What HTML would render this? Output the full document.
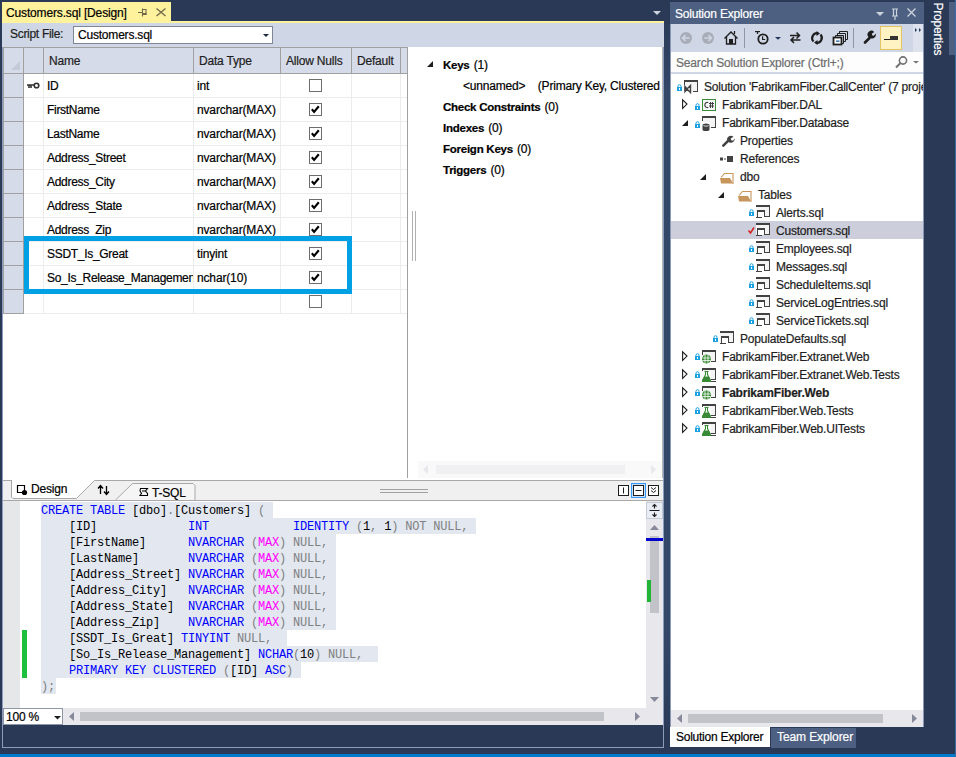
<!DOCTYPE html>
<html><head><meta charset="utf-8">
<style>
*{margin:0;padding:0;box-sizing:border-box}
html,body{width:956px;height:757px;overflow:hidden;background:#2a3955;font-family:"Liberation Sans",sans-serif;font-size:12px;color:#1e1e1e}
.a{position:absolute}
.t{position:absolute;white-space:nowrap;line-height:20px;height:20px;-webkit-text-stroke:0.2px currentColor}
.m{position:absolute;white-space:pre;font-family:"Liberation Mono",monospace;line-height:20px;height:20px}
svg{position:absolute;overflow:visible}
</style></head>
<body>

<div class="a" style="left:2px;top:2px;width:169px;height:19px;background:#fff29d;"></div>
<div class="t" style="left:6px;top:2.84px;font-size:12px;letter-spacing:-0.15px;color:#000;">Customers.sql [Design]</div>
<svg style="left:136px;top:6px" width="34" height="14" viewBox="0 0 34 14">
<path d="M2 6.5h4.5M6.5 2.5v8M6.5 3.5h3.5v5h-3.5" stroke="#6f6a4a" stroke-width="1.1" fill="none"/><rect x="6.5" y="7" width="4" height="2" fill="#6f6a4a"/>
<path d="M20.5 2.5l9 7.5M29.5 2.5l-9 7.5" stroke="#6f6a4a" stroke-width="1.3" fill="none"/>
</svg>
<div class="a" style="left:2px;top:21px;width:662px;height:2px;background:#fff29d;"></div>
<svg style="left:652px;top:10px" width="10" height="6"><path d="M1 1h8l-4 4z" fill="#ced4dd"/></svg>
<div class="a" style="left:2px;top:23px;width:662px;height:24px;background:#cfd6e5;"></div>
<div class="t" style="left:10px;top:23.84px;font-size:12px;letter-spacing:-0.3px;color:#1e1e1e;">Script File:</div>
<div class="a" style="left:73px;top:26px;width:200px;height:18px;background:#fff;border:1px solid #7f8797"></div>
<div class="t" style="left:78px;top:24.84px;font-size:12px;letter-spacing:-0.2px;color:#000;">Customers.sql</div>
<svg style="left:263px;top:34px" width="8" height="4"><path d="M0 0h6l-3 3z" fill="#1b293e"/></svg>
<div class="a" style="left:2px;top:47px;width:662px;height:432px;background:#fff;"></div>
<div class="a" style="left:2px;top:47px;width:1px;height:432px;background:#d6dbe9;"></div>
<div class="a" style="left:3px;top:47px;width:405px;height:27px;background:#d6dbe9;"></div>
<div class="a" style="left:3px;top:47px;width:405px;height:1px;background:#a0a0a0;"></div>
<div class="a" style="left:3px;top:73px;width:405px;height:1px;background:#a0a0a0;"></div>
<div class="a" style="left:23px;top:47px;width:1px;height:27px;background:#a0a0a0;"></div>
<div class="a" style="left:43px;top:47px;width:1px;height:27px;background:#a0a0a0;"></div>
<div class="a" style="left:193px;top:47px;width:1px;height:27px;background:#a0a0a0;"></div>
<div class="a" style="left:280px;top:47px;width:1px;height:27px;background:#a0a0a0;"></div>
<div class="a" style="left:351px;top:47px;width:1px;height:27px;background:#a0a0a0;"></div>
<div class="a" style="left:400px;top:47px;width:1px;height:27px;background:#a0a0a0;"></div>
<div class="a" style="left:407px;top:47px;width:1px;height:27px;background:#a0a0a0;"></div>
<div class="a" style="left:3px;top:47px;width:1px;height:267px;background:#a0a0a0;"></div>
<svg style="left:11px;top:60px" width="10" height="10"><path d="M9 1v9h-9z" fill="#c3c9d6"/></svg>
<div class="t" style="left:49px;top:50.84px;font-size:12px;letter-spacing:-0.2px;color:#1e1e1e;">Name</div>
<div class="t" style="left:199px;top:50.84px;font-size:12px;letter-spacing:-0.2px;color:#1e1e1e;">Data Type</div>
<div class="t" style="left:286px;top:50.84px;font-size:12px;letter-spacing:-0.2px;color:#1e1e1e;">Allow Nulls</div>
<div class="t" style="left:357px;top:50.84px;font-size:12px;letter-spacing:-0.2px;color:#1e1e1e;">Default</div>
<div class="a" style="left:4px;top:74px;width:19px;height:240px;background:#d6dbe9;"></div>
<div class="a" style="left:4px;top:97px;width:19px;height:1px;background:#a0a0a0;"></div>
<div class="a" style="left:24px;top:97px;width:384px;height:1px;background:#ececec;"></div>
<div class="a" style="left:43px;top:74px;width:1px;height:23px;background:#ececec;"></div>
<div class="a" style="left:193px;top:74px;width:1px;height:23px;background:#ececec;"></div>
<div class="a" style="left:280px;top:74px;width:1px;height:23px;background:#ececec;"></div>
<div class="a" style="left:351px;top:74px;width:1px;height:23px;background:#ececec;"></div>
<div class="a" style="left:400px;top:74px;width:1px;height:23px;background:#ececec;"></div>
<div class="a" style="left:44px;top:74px;width:149px;height:23px;overflow:hidden">
<div class="t" style="left:3px;top:1.84px;font-size:12px;letter-spacing:-0.3px;color:#000;">ID</div>
</div>
<div class="t" style="left:197px;top:75.84px;font-size:12px;letter-spacing:-0.15px;color:#000;">int</div>
<div class="a" style="left:309px;top:79px;width:13px;height:13px;background:#fff;border:1px solid #6e6e6e"></div>
<div class="a" style="left:4px;top:121px;width:19px;height:1px;background:#a0a0a0;"></div>
<div class="a" style="left:24px;top:121px;width:384px;height:1px;background:#ececec;"></div>
<div class="a" style="left:43px;top:98px;width:1px;height:23px;background:#ececec;"></div>
<div class="a" style="left:193px;top:98px;width:1px;height:23px;background:#ececec;"></div>
<div class="a" style="left:280px;top:98px;width:1px;height:23px;background:#ececec;"></div>
<div class="a" style="left:351px;top:98px;width:1px;height:23px;background:#ececec;"></div>
<div class="a" style="left:400px;top:98px;width:1px;height:23px;background:#ececec;"></div>
<div class="a" style="left:44px;top:98px;width:149px;height:23px;overflow:hidden">
<div class="t" style="left:3px;top:1.84px;font-size:12px;letter-spacing:-0.3px;color:#000;">FirstName</div>
</div>
<div class="t" style="left:197px;top:99.84px;font-size:12px;letter-spacing:-0.15px;color:#000;">nvarchar(MAX)</div>
<div class="a" style="left:309px;top:103px;width:13px;height:13px;background:#fff;border:1px solid #6e6e6e"></div>
<svg style="left:309px;top:103px" width="13" height="13"><path d="M2.8 6.3l2.3 2.6L9.8 3.3" stroke="#000" stroke-width="2.1" fill="none"/></svg>
<div class="a" style="left:4px;top:145px;width:19px;height:1px;background:#a0a0a0;"></div>
<div class="a" style="left:24px;top:145px;width:384px;height:1px;background:#ececec;"></div>
<div class="a" style="left:43px;top:122px;width:1px;height:23px;background:#ececec;"></div>
<div class="a" style="left:193px;top:122px;width:1px;height:23px;background:#ececec;"></div>
<div class="a" style="left:280px;top:122px;width:1px;height:23px;background:#ececec;"></div>
<div class="a" style="left:351px;top:122px;width:1px;height:23px;background:#ececec;"></div>
<div class="a" style="left:400px;top:122px;width:1px;height:23px;background:#ececec;"></div>
<div class="a" style="left:44px;top:122px;width:149px;height:23px;overflow:hidden">
<div class="t" style="left:3px;top:1.84px;font-size:12px;letter-spacing:-0.3px;color:#000;">LastName</div>
</div>
<div class="t" style="left:197px;top:123.84px;font-size:12px;letter-spacing:-0.15px;color:#000;">nvarchar(MAX)</div>
<div class="a" style="left:309px;top:127px;width:13px;height:13px;background:#fff;border:1px solid #6e6e6e"></div>
<svg style="left:309px;top:127px" width="13" height="13"><path d="M2.8 6.3l2.3 2.6L9.8 3.3" stroke="#000" stroke-width="2.1" fill="none"/></svg>
<div class="a" style="left:4px;top:169px;width:19px;height:1px;background:#a0a0a0;"></div>
<div class="a" style="left:24px;top:169px;width:384px;height:1px;background:#ececec;"></div>
<div class="a" style="left:43px;top:146px;width:1px;height:23px;background:#ececec;"></div>
<div class="a" style="left:193px;top:146px;width:1px;height:23px;background:#ececec;"></div>
<div class="a" style="left:280px;top:146px;width:1px;height:23px;background:#ececec;"></div>
<div class="a" style="left:351px;top:146px;width:1px;height:23px;background:#ececec;"></div>
<div class="a" style="left:400px;top:146px;width:1px;height:23px;background:#ececec;"></div>
<div class="a" style="left:44px;top:146px;width:149px;height:23px;overflow:hidden">
<div class="t" style="left:3px;top:1.84px;font-size:12px;letter-spacing:-0.3px;color:#000;">Address_Street</div>
</div>
<div class="t" style="left:197px;top:147.84px;font-size:12px;letter-spacing:-0.15px;color:#000;">nvarchar(MAX)</div>
<div class="a" style="left:309px;top:151px;width:13px;height:13px;background:#fff;border:1px solid #6e6e6e"></div>
<svg style="left:309px;top:151px" width="13" height="13"><path d="M2.8 6.3l2.3 2.6L9.8 3.3" stroke="#000" stroke-width="2.1" fill="none"/></svg>
<div class="a" style="left:4px;top:193px;width:19px;height:1px;background:#a0a0a0;"></div>
<div class="a" style="left:24px;top:193px;width:384px;height:1px;background:#ececec;"></div>
<div class="a" style="left:43px;top:170px;width:1px;height:23px;background:#ececec;"></div>
<div class="a" style="left:193px;top:170px;width:1px;height:23px;background:#ececec;"></div>
<div class="a" style="left:280px;top:170px;width:1px;height:23px;background:#ececec;"></div>
<div class="a" style="left:351px;top:170px;width:1px;height:23px;background:#ececec;"></div>
<div class="a" style="left:400px;top:170px;width:1px;height:23px;background:#ececec;"></div>
<div class="a" style="left:44px;top:170px;width:149px;height:23px;overflow:hidden">
<div class="t" style="left:3px;top:1.84px;font-size:12px;letter-spacing:-0.3px;color:#000;">Address_City</div>
</div>
<div class="t" style="left:197px;top:171.84px;font-size:12px;letter-spacing:-0.15px;color:#000;">nvarchar(MAX)</div>
<div class="a" style="left:309px;top:175px;width:13px;height:13px;background:#fff;border:1px solid #6e6e6e"></div>
<svg style="left:309px;top:175px" width="13" height="13"><path d="M2.8 6.3l2.3 2.6L9.8 3.3" stroke="#000" stroke-width="2.1" fill="none"/></svg>
<div class="a" style="left:4px;top:217px;width:19px;height:1px;background:#a0a0a0;"></div>
<div class="a" style="left:24px;top:217px;width:384px;height:1px;background:#ececec;"></div>
<div class="a" style="left:43px;top:194px;width:1px;height:23px;background:#ececec;"></div>
<div class="a" style="left:193px;top:194px;width:1px;height:23px;background:#ececec;"></div>
<div class="a" style="left:280px;top:194px;width:1px;height:23px;background:#ececec;"></div>
<div class="a" style="left:351px;top:194px;width:1px;height:23px;background:#ececec;"></div>
<div class="a" style="left:400px;top:194px;width:1px;height:23px;background:#ececec;"></div>
<div class="a" style="left:44px;top:194px;width:149px;height:23px;overflow:hidden">
<div class="t" style="left:3px;top:1.84px;font-size:12px;letter-spacing:-0.3px;color:#000;">Address_State</div>
</div>
<div class="t" style="left:197px;top:195.84px;font-size:12px;letter-spacing:-0.15px;color:#000;">nvarchar(MAX)</div>
<div class="a" style="left:309px;top:199px;width:13px;height:13px;background:#fff;border:1px solid #6e6e6e"></div>
<svg style="left:309px;top:199px" width="13" height="13"><path d="M2.8 6.3l2.3 2.6L9.8 3.3" stroke="#000" stroke-width="2.1" fill="none"/></svg>
<div class="a" style="left:4px;top:241px;width:19px;height:1px;background:#a0a0a0;"></div>
<div class="a" style="left:24px;top:241px;width:384px;height:1px;background:#ececec;"></div>
<div class="a" style="left:43px;top:218px;width:1px;height:23px;background:#ececec;"></div>
<div class="a" style="left:193px;top:218px;width:1px;height:23px;background:#ececec;"></div>
<div class="a" style="left:280px;top:218px;width:1px;height:23px;background:#ececec;"></div>
<div class="a" style="left:351px;top:218px;width:1px;height:23px;background:#ececec;"></div>
<div class="a" style="left:400px;top:218px;width:1px;height:23px;background:#ececec;"></div>
<div class="a" style="left:44px;top:218px;width:149px;height:23px;overflow:hidden">
<div class="t" style="left:3px;top:1.84px;font-size:12px;letter-spacing:-0.3px;color:#000;">Address_Zip</div>
</div>
<div class="t" style="left:197px;top:219.84px;font-size:12px;letter-spacing:-0.15px;color:#000;">nvarchar(MAX)</div>
<div class="a" style="left:309px;top:223px;width:13px;height:13px;background:#fff;border:1px solid #6e6e6e"></div>
<svg style="left:309px;top:223px" width="13" height="13"><path d="M2.8 6.3l2.3 2.6L9.8 3.3" stroke="#000" stroke-width="2.1" fill="none"/></svg>
<div class="a" style="left:4px;top:265px;width:19px;height:1px;background:#a0a0a0;"></div>
<div class="a" style="left:24px;top:265px;width:384px;height:1px;background:#ececec;"></div>
<div class="a" style="left:43px;top:242px;width:1px;height:23px;background:#ececec;"></div>
<div class="a" style="left:193px;top:242px;width:1px;height:23px;background:#ececec;"></div>
<div class="a" style="left:280px;top:242px;width:1px;height:23px;background:#ececec;"></div>
<div class="a" style="left:351px;top:242px;width:1px;height:23px;background:#ececec;"></div>
<div class="a" style="left:400px;top:242px;width:1px;height:23px;background:#ececec;"></div>
<div class="a" style="left:44px;top:242px;width:149px;height:23px;overflow:hidden">
<div class="t" style="left:3px;top:1.84px;font-size:12px;letter-spacing:-0.3px;color:#000;">SSDT_Is_Great</div>
</div>
<div class="t" style="left:197px;top:243.84px;font-size:12px;letter-spacing:-0.15px;color:#000;">tinyint</div>
<div class="a" style="left:309px;top:247px;width:13px;height:13px;background:#fff;border:1px solid #6e6e6e"></div>
<svg style="left:309px;top:247px" width="13" height="13"><path d="M2.8 6.3l2.3 2.6L9.8 3.3" stroke="#000" stroke-width="2.1" fill="none"/></svg>
<div class="a" style="left:4px;top:289px;width:19px;height:1px;background:#a0a0a0;"></div>
<div class="a" style="left:24px;top:289px;width:384px;height:1px;background:#ececec;"></div>
<div class="a" style="left:43px;top:266px;width:1px;height:23px;background:#ececec;"></div>
<div class="a" style="left:193px;top:266px;width:1px;height:23px;background:#ececec;"></div>
<div class="a" style="left:280px;top:266px;width:1px;height:23px;background:#ececec;"></div>
<div class="a" style="left:351px;top:266px;width:1px;height:23px;background:#ececec;"></div>
<div class="a" style="left:400px;top:266px;width:1px;height:23px;background:#ececec;"></div>
<div class="a" style="left:44px;top:266px;width:149px;height:23px;overflow:hidden">
<div class="t" style="left:3px;top:1.84px;font-size:12px;letter-spacing:-0.3px;color:#000;">So_Is_Release_Managemen</div>
</div>
<div class="t" style="left:197px;top:267.84px;font-size:12px;letter-spacing:-0.15px;color:#000;">nchar(10)</div>
<div class="a" style="left:309px;top:271px;width:13px;height:13px;background:#fff;border:1px solid #6e6e6e"></div>
<svg style="left:309px;top:271px" width="13" height="13"><path d="M2.8 6.3l2.3 2.6L9.8 3.3" stroke="#000" stroke-width="2.1" fill="none"/></svg>
<div class="a" style="left:4px;top:313px;width:19px;height:1px;background:#a0a0a0;"></div>
<div class="a" style="left:24px;top:313px;width:384px;height:1px;background:#ececec;"></div>
<div class="a" style="left:43px;top:290px;width:1px;height:23px;background:#ececec;"></div>
<div class="a" style="left:193px;top:290px;width:1px;height:23px;background:#ececec;"></div>
<div class="a" style="left:280px;top:290px;width:1px;height:23px;background:#ececec;"></div>
<div class="a" style="left:351px;top:290px;width:1px;height:23px;background:#ececec;"></div>
<div class="a" style="left:400px;top:290px;width:1px;height:23px;background:#ececec;"></div>
<div class="a" style="left:309px;top:295px;width:13px;height:13px;background:#fff;border:1px solid #6e6e6e"></div>
<div class="a" style="left:23px;top:74px;width:1px;height:240px;background:#a0a0a0;"></div>
<div class="a" style="left:407px;top:47px;width:1px;height:432px;background:#a0a0a0;"></div>
<svg style="left:26px;top:81px" width="14" height="10"><path d="M1 4h8M3 4v3M5 4v3" stroke="#333" stroke-width="1.6" fill="none"/><circle cx="10.5" cy="4.5" r="2.3" stroke="#333" stroke-width="1.6" fill="none"/></svg>
<div class="a" style="left:24px;top:236px;width:328px;height:58px;background:transparent;border:5px solid #00a0e4"></div>
<svg style="left:427px;top:61px" width="7" height="7"><path d="M6 0v6h-6z" fill="#1e1e1e"/></svg>
<div class="t" style="left:443px;top:54.84px;font-size:12px;letter-spacing:-0.2px;color:#000"><b style="font-size:11.5px;letter-spacing:-0.25px;margin-right:1px">Keys</b> (1)</div>
<div class="t" style="left:463px;top:75.84px;font-size:12px;letter-spacing:-0.2px;color:#000;">&lt;unnamed&gt;&nbsp;&nbsp;&nbsp; (Primary Key, Clustered</div>
<div class="t" style="left:443px;top:96.84px;font-size:12px;letter-spacing:-0.2px;color:#000"><b style="font-size:11.5px;letter-spacing:-0.25px;margin-right:1px">Check Constraints</b> (0)</div>
<div class="t" style="left:443px;top:117.84px;font-size:12px;letter-spacing:-0.2px;color:#000"><b style="font-size:11.5px;letter-spacing:-0.25px;margin-right:1px">Indexes</b> (0)</div>
<div class="t" style="left:443px;top:138.84px;font-size:12px;letter-spacing:-0.2px;color:#000"><b style="font-size:11.5px;letter-spacing:-0.25px;margin-right:1px">Foreign Keys</b> (0)</div>
<div class="t" style="left:443px;top:159.84px;font-size:12px;letter-spacing:-0.2px;color:#000"><b style="font-size:11.5px;letter-spacing:-0.25px;margin-right:1px">Triggers</b> (0)</div>
<div class="a" style="left:412px;top:211px;width:1px;height:50px;background:#b0b0b0;"></div>
<div class="a" style="left:415px;top:211px;width:1px;height:50px;background:#b0b0b0;"></div>
<div class="a" style="left:418px;top:461px;width:244px;height:17px;background:#f9f9fa;"></div>
<div class="a" style="left:436px;top:465px;width:189px;height:9px;background:#f0f0f2;"></div>
<svg style="left:423px;top:465px" width="8" height="10"><path d="M5 0v9l-5-4.5z" fill="#e8e8ec"/></svg>
<svg style="left:651px;top:465px" width="8" height="10"><path d="M0 0v9l5-4.5z" fill="#e8e8ec"/></svg>
<div class="a" style="left:3px;top:478px;width:660px;height:2px;background:#fff;"></div>
<div class="a" style="left:3px;top:480px;width:660px;height:20px;background:#f0f0f0;"></div>
<div class="a" style="left:3px;top:500px;width:660px;height:1px;background:#a8a8a8;"></div>
<svg style="left:0px;top:479px" width="664" height="22">
<path d="M3 1.5h9M94 1.5h569" stroke="#a8a8a8" fill="none"/>
<path d="M12 1v17l2 2h63l18-19z" fill="#fff"/>
<path d="M11.5 1v17l1.5 1.5h63.5l18-18" stroke="#a8a8a8" fill="none"/>
<path d="M116 21l17-16h60l2 2v14z" fill="#f5f5f5"/>
<path d="M115.5 21l17-16.5h60.5l2 2v14.5" stroke="#a8a8a8" fill="none"/>
<path d="M17.5 6.5h7v7h-7z" stroke="#000" stroke-width="1.2" fill="none"/><circle cx="24.5" cy="13.5" r="2.6" fill="#000"/>
<path d="M100.5 15V7M98 9.5l2.5-3l2.5 3M106.5 7v8M104 12.5l2.5 3l2.5-3" stroke="#000" stroke-width="1.3" fill="none"/>
<path d="M140.5 9.5h7l-2 2.5l2 2.5v2h-7.5l1.5-2l-1.5-2.5zM142 12h4M140 16.5h3" stroke="#000" stroke-width="1.1" fill="none"/>
</svg>
<div class="t" style="left:31px;top:478.84px;font-size:12px;letter-spacing:-0.2px;color:#000;">Design</div>
<div class="t" style="left:152px;top:482.84px;font-size:12px;letter-spacing:-0.2px;color:#000;">T-SQL</div>
<div class="a" style="left:380px;top:489px;width:48px;height:1px;background:#a0a0a0;"></div>
<div class="a" style="left:380px;top:492px;width:48px;height:1px;background:#a0a0a0;"></div>
<svg style="left:617px;top:483px" width="44" height="15">
<rect x="1.5" y="2.5" width="10" height="10" fill="#fff" stroke="#1e1e1e"/><path d="M6.5 4.5v6" stroke="#1e1e1e"/>
<rect x="14.5" y="0.5" width="14" height="14" fill="#c9def5" stroke="#3399ff"/><rect x="16.5" y="2.5" width="10" height="10" fill="#fff" stroke="#1e1e1e"/><path d="M18.5 7.5h6" stroke="#1e1e1e"/>
<rect x="31.5" y="2.5" width="10" height="10" fill="#fff" stroke="#1e1e1e"/><path d="M34 4.5l2.5 2l2.5-2M34 7.5l2.5 2l2.5-2" stroke="#1e1e1e" fill="none"/>
</svg>
<div class="a" style="left:3px;top:501px;width:660px;height:207px;background:#fff;"></div>
<div class="a" style="left:3px;top:501px;width:17px;height:207px;background:#e6e7e8;"></div>
<div class="a" style="left:22px;top:630px;width:5px;height:48px;background:#1cbf3e;"></div>
<div class="a" style="left:41px;top:502px;width:232px;height:16px;background:#e3e8f0;"></div>
<div class="m" style="left:41px;top:500.81px;font-size:12px;letter-spacing:-0.2px"><span style="color:#0000ff">CREATE TABLE </span><span style="color:#000">[dbo]</span><span style="color:#808080">.</span><span style="color:#000">[Customers] </span><span style="color:#808080">(</span></div>
<div class="a" style="left:41px;top:518px;width:435px;height:16px;background:#e3e8f0;"></div>
<div class="m" style="left:41px;top:516.80px;font-size:12px;letter-spacing:-0.2px"><span style="color:#000">    [ID]             </span><span style="color:#0000ff">INT</span><span style="color:#000">            </span><span style="color:#0000ff">IDENTITY </span><span style="color:#808080">(</span><span style="color:#000">1</span><span style="color:#808080">, </span><span style="color:#000">1</span><span style="color:#808080">) NOT NULL,</span></div>
<div class="a" style="left:41px;top:534px;width:295px;height:16px;background:#e3e8f0;"></div>
<div class="m" style="left:41px;top:532.80px;font-size:12px;letter-spacing:-0.2px"><span style="color:#000">    [FirstName]      </span><span style="color:#0000ff">NVARCHAR </span><span style="color:#808080">(</span><span style="color:#ff00ff">MAX</span><span style="color:#808080">) NULL,</span></div>
<div class="a" style="left:41px;top:550px;width:295px;height:16px;background:#e3e8f0;"></div>
<div class="m" style="left:41px;top:548.80px;font-size:12px;letter-spacing:-0.2px"><span style="color:#000">    [LastName]       </span><span style="color:#0000ff">NVARCHAR </span><span style="color:#808080">(</span><span style="color:#ff00ff">MAX</span><span style="color:#808080">) NULL,</span></div>
<div class="a" style="left:41px;top:566px;width:295px;height:16px;background:#e3e8f0;"></div>
<div class="m" style="left:41px;top:564.80px;font-size:12px;letter-spacing:-0.2px"><span style="color:#000">    [Address_Street] </span><span style="color:#0000ff">NVARCHAR </span><span style="color:#808080">(</span><span style="color:#ff00ff">MAX</span><span style="color:#808080">) NULL,</span></div>
<div class="a" style="left:41px;top:582px;width:295px;height:16px;background:#e3e8f0;"></div>
<div class="m" style="left:41px;top:580.80px;font-size:12px;letter-spacing:-0.2px"><span style="color:#000">    [Address_City]   </span><span style="color:#0000ff">NVARCHAR </span><span style="color:#808080">(</span><span style="color:#ff00ff">MAX</span><span style="color:#808080">) NULL,</span></div>
<div class="a" style="left:41px;top:598px;width:295px;height:16px;background:#e3e8f0;"></div>
<div class="m" style="left:41px;top:596.80px;font-size:12px;letter-spacing:-0.2px"><span style="color:#000">    [Address_State]  </span><span style="color:#0000ff">NVARCHAR </span><span style="color:#808080">(</span><span style="color:#ff00ff">MAX</span><span style="color:#808080">) NULL,</span></div>
<div class="a" style="left:41px;top:614px;width:295px;height:16px;background:#e3e8f0;"></div>
<div class="m" style="left:41px;top:612.80px;font-size:12px;letter-spacing:-0.2px"><span style="color:#000">    [Address_Zip]    </span><span style="color:#0000ff">NVARCHAR </span><span style="color:#808080">(</span><span style="color:#ff00ff">MAX</span><span style="color:#808080">) NULL,</span></div>
<div class="a" style="left:41px;top:630px;width:246px;height:16px;background:#e3e8f0;"></div>
<div class="m" style="left:41px;top:628.80px;font-size:12px;letter-spacing:-0.2px"><span style="color:#000">    [SSDT_Is_Great] </span><span style="color:#0000ff">TINYINT </span><span style="color:#808080">NULL,</span></div>
<div class="a" style="left:41px;top:646px;width:337px;height:16px;background:#e3e8f0;"></div>
<div class="m" style="left:41px;top:644.80px;font-size:12px;letter-spacing:-0.2px"><span style="color:#000">    [So_Is_Release_Management] </span><span style="color:#0000ff">NCHAR</span><span style="color:#808080">(</span><span style="color:#000">10</span><span style="color:#808080">) NULL,</span></div>
<div class="a" style="left:41px;top:662px;width:260px;height:16px;background:#e3e8f0;"></div>
<div class="m" style="left:41px;top:660.80px;font-size:12px;letter-spacing:-0.2px"><span style="color:#000">    </span><span style="color:#0000ff">PRIMARY KEY CLUSTERED </span><span style="color:#808080">(</span><span style="color:#000">[ID] </span><span style="color:#0000ff">ASC</span><span style="color:#808080">)</span></div>
<div class="a" style="left:41px;top:678px;width:15px;height:16px;background:#e3e8f0;"></div>
<div class="m" style="left:41px;top:676.80px;font-size:12px;letter-spacing:-0.2px"><span style="color:#808080">);</span></div>
<div class="a" style="left:646px;top:501px;width:17px;height:207px;background:#e8e8ec;"></div>
<svg style="left:646px;top:501px" width="17" height="120">
<rect x="0.5" y="1.5" width="16" height="16" fill="#e7ecf5" stroke="#c5cad3"/>
<path d="M3.5 9.5h10M8.5 3.5v4M8.5 11.5v4M6.5 5.5l2-2l2 2M6.5 13.5l2 2l2-2" stroke="#1e1e1e" stroke-width="1.1" fill="none"/>
<path d="M4 29h9l-4.5-5z" fill="#868999"/>
<rect x="4" y="35" width="9" height="77" fill="#c2c3c9"/>
<rect x="0" y="37" width="17" height="3" fill="#0000cd"/>
<rect x="1" y="79" width="4" height="22" fill="#21b436"/>
</svg>
<svg style="left:650px;top:697px" width="10" height="6"><path d="M0 0h9l-4.5 5z" fill="#868999"/></svg>
<div class="a" style="left:3px;top:708px;width:660px;height:17px;background:#e8e8ec;"></div>
<div class="a" style="left:3px;top:708px;width:60px;height:17px;background:#fff;border:1px solid #8e97a8"></div>
<div class="t" style="left:6px;top:706.84px;font-size:12px;letter-spacing:-0.2px;color:#000;">100 %</div>
<svg style="left:54px;top:716px" width="8" height="4"><path d="M0 0h7l-3.5 3.5z" fill="#1e1e1e"/></svg>
<svg style="left:69px;top:712px" width="8" height="10"><path d="M5 0v9l-5-4.5z" fill="#868999"/></svg>
<div class="a" style="left:80px;top:712px;width:524px;height:9px;background:#c2c3c9;"></div>
<svg style="left:635px;top:712px" width="8" height="10"><path d="M0 0v9l5-4.5z" fill="#868999"/></svg>
<div class="a" style="left:2px;top:47px;width:662px;height:701px;border:1px solid #8d9cbc;border-top:none;background:transparent;pointer-events:none"></div>
<div class="a" style="left:662px;top:47px;width:1px;height:431px;background:#b4b4b4;"></div>
<div class="a" style="left:664px;top:24px;width:6px;height:703px;background:linear-gradient(#2b3c5a 0px,#34486a 70px,#34486a 600px,#2b3c5a 700px);"></div>
<div class="a" style="left:0px;top:754px;width:956px;height:3px;background:#007acc;"></div>
<div class="a" style="left:670px;top:2px;width:254px;height:746px;background:#fff;"></div>
<div class="a" style="left:670px;top:2px;width:254px;height:22px;background:#4d6082;"></div>
<div class="t" style="left:675px;top:3.84px;font-size:12px;letter-spacing:-0.2px;color:#fff;">Solution Explorer</div>
<svg style="left:870px;top:4px" width="54" height="18">
<path d="M6 8h8l-4 4z" fill="#ced4dd"/>
<path d="M22 5h6M23.5 5v7M26.5 5v7M22 12h6M25 12v4" stroke="#ced4dd" stroke-width="1.2" fill="none"/>
<path d="M37.5 4.5l8 8M45.5 4.5l-8 8" stroke="#ced4dd" stroke-width="1.3" fill="none"/>
</svg>
<div class="a" style="left:670px;top:24px;width:254px;height:28px;background:#cfd6e5;"></div>
<div class="a" style="left:913px;top:24px;width:10px;height:28px;background:#dde2ec;"></div>
<div class="a" style="left:880px;top:26px;width:22px;height:24px;background:#fff3c4;border:1px solid #e5c365"></div>
<svg style="left:670px;top:24px" width="254" height="28">
<circle cx="16" cy="14" r="6" fill="#a8adb8"/><path d="M12.5 14h7M15.5 11l-3 3l3 3" stroke="#cfd6e5" stroke-width="1.6" fill="none"/>
<circle cx="38" cy="14" r="6" fill="#a8adb8"/><path d="M34.5 14h7M38.5 11l3 3l-3 3" stroke="#cfd6e5" stroke-width="1.6" fill="none"/>
<path d="M54.5 14.5l6.5-6.5l6.5 6.5M56.5 12.5v7.5h9v-7.5M64.5 10v-3" stroke="#1e1e1e" stroke-width="1.3" fill="none"/><rect x="59" y="15" width="4" height="5" fill="#1e1e1e"/>
<rect x="74" y="4" width="1" height="20" fill="#8e97a8"/>
<rect x="85" y="7" width="5" height="1.2" fill="#1e1e1e"/><rect x="86.9" y="7" width="1.2" height="3" fill="#1e1e1e"/><circle cx="93" cy="15" r="4.7" stroke="#1e1e1e" stroke-width="1.8" fill="none"/><path d="M92.6 12.2v3.3h2.6" stroke="#1e1e1e" stroke-width="1.2" fill="none"/>
<path d="M105 13h6l-3 2.8z" fill="#1e395b"/>
<path d="M120 11.5h9.5M126.5 8.5l3 3l-3 3M130.5 16h-9.5M124 13l-3 3l3 3" stroke="#1e1e1e" stroke-width="1.5" fill="none"/>
<path d="M148 9.2a5 5 0 0 0-4.5 8.3M146 18.8a5 5 0 0 0 4.5-8.3" stroke="#1e1e1e" stroke-width="2.2" fill="none"/><path d="M146.5 7l3.5 2.5l-3.5 2.5zM147.5 21l-3.5-2.5l3.5-2.5z" fill="#1e1e1e"/>
<path d="M167.5 11.5v-2h8v8h-2M169.5 9.5v-2h6.5v0M169.5 7.5h8v8h-2" stroke="#1e1e1e" stroke-width="1" fill="none"/><path d="M165.5 13.5v-2h8v8h-2" stroke="#1e1e1e" stroke-width="1" fill="none"/><rect x="163.5" y="13.5" width="8" height="7" fill="#fff" stroke="#1e1e1e" stroke-width="1.8"/><rect x="166" y="16.5" width="3.5" height="1.3" fill="#1e5ba8"/>
<rect x="183" y="4" width="1" height="20" fill="#8e97a8"/>
<path d="M195 18.5l4.5-4.5" stroke="#1e1e1e" stroke-width="2.6" stroke-linecap="round"/><path d="M198.6 13.2a3.8 3.8 0 0 1 5.6-5.2l-2.4 1.8l0.5 1.6l1.6 0.4l1.8-2.2a3.8 3.8 0 0 1-5.2 4.6z" fill="#1e1e1e"/>
<rect x="214" y="15" width="6" height="1" fill="#1e1e1e"/><rect x="220" y="12" width="8" height="4" fill="#333"/>
<path d="M245 4l2 2l-2 2zM249 4l2 2l-2 2z" fill="#1e395b"/>
</svg>
<div class="a" style="left:671px;top:52px;width:252px;height:20px;background:#fdfdfd;"></div>
<div class="t" style="left:676px;top:52.84px;font-size:12px;letter-spacing:-0.17px;color:#6d6d6d;">Search Solution Explorer (Ctrl+;)</div>
<div class="a" style="left:670px;top:72px;width:254px;height:2px;background:#cfd6e5;"></div>
<svg style="left:895px;top:56px" width="28" height="14"><circle cx="8" cy="4.5" r="3.6" stroke="#717171" stroke-width="1.6" fill="none"/><path d="M5.5 7l-4.5 4.5" stroke="#717171" stroke-width="2"/><path d="M18 5h6l-3 2.6z" fill="#717171"/></svg>
<div class="a" style="left:0;top:0;width:923px;height:710px;overflow:hidden">
<div class="a" style="left:671px;top:221px;width:252px;height:18px;background:#cccedb;"></div>
<svg style="left:677px;top:84px" width="5" height="7"><path d="M1 3V2.2a1.5 1.5 0 0 1 3 0V3" stroke="#1ba1e2" stroke-width="1" fill="none"/><rect x="0" y="3" width="5" height="4" fill="#1ba1e2"/><rect x="2" y="4" width="1" height="2" fill="#fff"/></svg>
<svg style="left:684px;top:80px" width="15" height="15"><rect x="0" y="2" width="13" height="10" fill="#f4f4f4"/><rect x="0" y="0" width="14" height="2" fill="#424242"/><rect x="13" y="0" width="1" height="12" fill="#424242"/><rect x="9" y="11" width="5" height="1" fill="#424242"/><rect x="0" y="0" width="1" height="5" fill="#424242"/><path d="M0.5 6.5v5l2.5-2.5z" fill="#424242"/><path d="M1 6.5l2 2.5l3.5-3.5v7l-3.5-3.5l-2 2.5z" stroke="#424242" stroke-width="1.4" fill="none"/></svg>
<div class="t" style="left:704px;top:76.84px;font-size:12px;letter-spacing:-0.2px;color:#1e1e1e;">Solution 'FabrikamFiber.CallCenter' (7 projects)</div>
<svg style="left:682px;top:99px" width="7" height="11"><path d="M0.6 0.8v8.6l4.4-4.3z" stroke="#1e1e1e" stroke-width="1.1" fill="none"/></svg>
<svg style="left:695px;top:103px" width="5" height="7"><path d="M1 3V2.2a1.5 1.5 0 0 1 3 0V3" stroke="#1ba1e2" stroke-width="1" fill="none"/><rect x="0" y="3" width="5" height="4" fill="#1ba1e2"/><rect x="2" y="4" width="1" height="2" fill="#fff"/></svg>
<svg style="left:702px;top:99px" width="15" height="13"><rect x="0.5" y="0.5" width="13" height="11" fill="#f6f6f6" stroke="#388a34"/><path d="M6.2 3.6a2.3 2.6 0 1 0 0 4.6" stroke="#424242" stroke-width="1.2" fill="none"/><rect x="8" y="3" width="1" height="6" fill="#424242"/><rect x="10" y="3" width="1" height="6" fill="#424242"/><rect x="7" y="4" width="5" height="1" fill="#424242"/><rect x="7" y="6.5" width="5" height="1" fill="#424242"/></svg>
<div class="t" style="left:722px;top:94.84px;font-size:12px;letter-spacing:-0.2px;color:#1e1e1e;">FabrikamFiber.DAL</div>
<svg style="left:682px;top:120px" width="7" height="7"><path d="M6 0v6h-6z" fill="#1e1e1e"/></svg>
<svg style="left:695px;top:121px" width="5" height="7"><path d="M1 3V2.2a1.5 1.5 0 0 1 3 0V3" stroke="#1ba1e2" stroke-width="1" fill="none"/><rect x="0" y="3" width="5" height="4" fill="#1ba1e2"/><rect x="2" y="4" width="1" height="2" fill="#fff"/></svg>
<svg style="left:702px;top:116px" width="15" height="15"><rect x="0" y="2" width="13" height="10" fill="#f4f4f4"/><rect x="0" y="0" width="14" height="2" fill="#424242"/><rect x="13" y="0" width="1" height="12" fill="#424242"/><rect x="9" y="11" width="5" height="1" fill="#424242"/><rect x="0" y="0" width="1" height="5" fill="#424242"/><rect x="0" y="6" width="8" height="9" fill="#fff"/><path d="M0.5 9a3.5 1.6 0 0 1 7 0v4.5a3.5 1.5 0 0 1-7 0z" fill="#424242"/><path d="M1.5 9.2a2.5 1 0 0 0 5 0" stroke="#fff" stroke-width="0.8" fill="none"/></svg>
<div class="t" style="left:722px;top:112.84px;font-size:12px;letter-spacing:-0.2px;color:#1e1e1e;">FabrikamFiber.Database</div>
<svg style="left:722px;top:136px" width="12" height="11"><path d="M1.3 9.7l4.5-4.5" stroke="#424242" stroke-width="2.6" stroke-linecap="round"/><path d="M5 4.5a4 4 0 0 1 6.5-3.8l-2.8 1.8l0.6 1.8l1.8 0.5l1.6-2.6a4 4 0 0 1-5 4.5z" fill="#424242"/></svg>
<div class="t" style="left:740px;top:130.84px;font-size:12px;letter-spacing:-0.2px;color:#1e1e1e;">Properties</div>
<svg style="left:720px;top:156px" width="15" height="8"><rect x="0" y="1.5" width="3" height="3" fill="#424242"/><rect x="4" y="2.5" width="2" height="1" fill="#424242"/><rect x="7" y="0" width="6" height="6" fill="#424242"/></svg>
<div class="t" style="left:740px;top:148.84px;font-size:12px;letter-spacing:-0.2px;color:#1e1e1e;">References</div>
<svg style="left:700px;top:174px" width="7" height="7"><path d="M6 0v6h-6z" fill="#1e1e1e"/></svg>
<svg style="left:720px;top:172px" width="15" height="13"><path d="M1.5 5.5v-0.5l3-3.5h8.5v10.5" stroke="#c8955a" stroke-width="1.1" fill="none"/><path d="M0 6h10l3 5.5h-12z" fill="#c8955a"/></svg>
<div class="t" style="left:740px;top:166.84px;font-size:12px;letter-spacing:-0.2px;color:#1e1e1e;">dbo</div>
<svg style="left:718px;top:192px" width="7" height="7"><path d="M6 0v6h-6z" fill="#1e1e1e"/></svg>
<svg style="left:738px;top:190px" width="15" height="13"><path d="M1.5 5.5v-0.5l3-3.5h8.5v10.5" stroke="#c8955a" stroke-width="1.1" fill="none"/><path d="M0 6h10l3 5.5h-12z" fill="#c8955a"/></svg>
<div class="t" style="left:758px;top:184.84px;font-size:12px;letter-spacing:-0.2px;color:#1e1e1e;">Tables</div>
<svg style="left:749px;top:209px" width="5" height="7"><path d="M1 3V2.2a1.5 1.5 0 0 1 3 0V3" stroke="#1ba1e2" stroke-width="1" fill="none"/><rect x="0" y="3" width="5" height="4" fill="#1ba1e2"/><rect x="2" y="4" width="1" height="2" fill="#fff"/></svg>
<svg style="left:756px;top:205px" width="15" height="15"><rect x="0" y="2" width="13" height="10" fill="#f4f4f4"/><rect x="0" y="0" width="14" height="2" fill="#424242"/><rect x="13" y="0" width="1" height="12" fill="#424242"/><rect x="9" y="11" width="5" height="1" fill="#424242"/><rect x="1" y="5" width="8" height="2" fill="#424242"/><rect x="8" y="5" width="1" height="7" fill="#424242"/><rect x="1" y="7" width="1" height="6" fill="#424242"/><rect x="0" y="12" width="6" height="1" fill="#424242"/><rect x="2" y="7" width="6" height="5" fill="#fff"/></svg>
<div class="t" style="left:776px;top:202.84px;font-size:12px;letter-spacing:-0.2px;color:#1e1e1e;">Alerts.sql</div>
<svg style="left:748px;top:227px" width="7" height="7"><path d="M0.5 3.5l2 2.5l3.5-5.5" stroke="#d81e1e" stroke-width="1.5" fill="none"/></svg>
<svg style="left:756px;top:223px" width="15" height="15"><rect x="0" y="2" width="13" height="10" fill="#f4f4f4"/><rect x="0" y="0" width="14" height="2" fill="#424242"/><rect x="13" y="0" width="1" height="12" fill="#424242"/><rect x="9" y="11" width="5" height="1" fill="#424242"/><rect x="1" y="5" width="8" height="2" fill="#424242"/><rect x="8" y="5" width="1" height="7" fill="#424242"/><rect x="1" y="7" width="1" height="6" fill="#424242"/><rect x="0" y="12" width="6" height="1" fill="#424242"/><rect x="2" y="7" width="6" height="5" fill="#fff"/></svg>
<div class="t" style="left:776px;top:220.84px;font-size:12px;letter-spacing:-0.2px;color:#1e1e1e;">Customers.sql</div>
<svg style="left:749px;top:245px" width="5" height="7"><path d="M1 3V2.2a1.5 1.5 0 0 1 3 0V3" stroke="#1ba1e2" stroke-width="1" fill="none"/><rect x="0" y="3" width="5" height="4" fill="#1ba1e2"/><rect x="2" y="4" width="1" height="2" fill="#fff"/></svg>
<svg style="left:756px;top:241px" width="15" height="15"><rect x="0" y="2" width="13" height="10" fill="#f4f4f4"/><rect x="0" y="0" width="14" height="2" fill="#424242"/><rect x="13" y="0" width="1" height="12" fill="#424242"/><rect x="9" y="11" width="5" height="1" fill="#424242"/><rect x="1" y="5" width="8" height="2" fill="#424242"/><rect x="8" y="5" width="1" height="7" fill="#424242"/><rect x="1" y="7" width="1" height="6" fill="#424242"/><rect x="0" y="12" width="6" height="1" fill="#424242"/><rect x="2" y="7" width="6" height="5" fill="#fff"/></svg>
<div class="t" style="left:776px;top:238.84px;font-size:12px;letter-spacing:-0.2px;color:#1e1e1e;">Employees.sql</div>
<svg style="left:749px;top:263px" width="5" height="7"><path d="M1 3V2.2a1.5 1.5 0 0 1 3 0V3" stroke="#1ba1e2" stroke-width="1" fill="none"/><rect x="0" y="3" width="5" height="4" fill="#1ba1e2"/><rect x="2" y="4" width="1" height="2" fill="#fff"/></svg>
<svg style="left:756px;top:259px" width="15" height="15"><rect x="0" y="2" width="13" height="10" fill="#f4f4f4"/><rect x="0" y="0" width="14" height="2" fill="#424242"/><rect x="13" y="0" width="1" height="12" fill="#424242"/><rect x="9" y="11" width="5" height="1" fill="#424242"/><rect x="1" y="5" width="8" height="2" fill="#424242"/><rect x="8" y="5" width="1" height="7" fill="#424242"/><rect x="1" y="7" width="1" height="6" fill="#424242"/><rect x="0" y="12" width="6" height="1" fill="#424242"/><rect x="2" y="7" width="6" height="5" fill="#fff"/></svg>
<div class="t" style="left:776px;top:256.84px;font-size:12px;letter-spacing:-0.2px;color:#1e1e1e;">Messages.sql</div>
<svg style="left:749px;top:281px" width="5" height="7"><path d="M1 3V2.2a1.5 1.5 0 0 1 3 0V3" stroke="#1ba1e2" stroke-width="1" fill="none"/><rect x="0" y="3" width="5" height="4" fill="#1ba1e2"/><rect x="2" y="4" width="1" height="2" fill="#fff"/></svg>
<svg style="left:756px;top:277px" width="15" height="15"><rect x="0" y="2" width="13" height="10" fill="#f4f4f4"/><rect x="0" y="0" width="14" height="2" fill="#424242"/><rect x="13" y="0" width="1" height="12" fill="#424242"/><rect x="9" y="11" width="5" height="1" fill="#424242"/><rect x="1" y="5" width="8" height="2" fill="#424242"/><rect x="8" y="5" width="1" height="7" fill="#424242"/><rect x="1" y="7" width="1" height="6" fill="#424242"/><rect x="0" y="12" width="6" height="1" fill="#424242"/><rect x="2" y="7" width="6" height="5" fill="#fff"/></svg>
<div class="t" style="left:776px;top:274.84px;font-size:12px;letter-spacing:-0.2px;color:#1e1e1e;">ScheduleItems.sql</div>
<svg style="left:749px;top:299px" width="5" height="7"><path d="M1 3V2.2a1.5 1.5 0 0 1 3 0V3" stroke="#1ba1e2" stroke-width="1" fill="none"/><rect x="0" y="3" width="5" height="4" fill="#1ba1e2"/><rect x="2" y="4" width="1" height="2" fill="#fff"/></svg>
<svg style="left:756px;top:295px" width="15" height="15"><rect x="0" y="2" width="13" height="10" fill="#f4f4f4"/><rect x="0" y="0" width="14" height="2" fill="#424242"/><rect x="13" y="0" width="1" height="12" fill="#424242"/><rect x="9" y="11" width="5" height="1" fill="#424242"/><rect x="1" y="5" width="8" height="2" fill="#424242"/><rect x="8" y="5" width="1" height="7" fill="#424242"/><rect x="1" y="7" width="1" height="6" fill="#424242"/><rect x="0" y="12" width="6" height="1" fill="#424242"/><rect x="2" y="7" width="6" height="5" fill="#fff"/></svg>
<div class="t" style="left:776px;top:292.84px;font-size:12px;letter-spacing:-0.2px;color:#1e1e1e;">ServiceLogEntries.sql</div>
<svg style="left:749px;top:317px" width="5" height="7"><path d="M1 3V2.2a1.5 1.5 0 0 1 3 0V3" stroke="#1ba1e2" stroke-width="1" fill="none"/><rect x="0" y="3" width="5" height="4" fill="#1ba1e2"/><rect x="2" y="4" width="1" height="2" fill="#fff"/></svg>
<svg style="left:756px;top:313px" width="15" height="15"><rect x="0" y="2" width="13" height="10" fill="#f4f4f4"/><rect x="0" y="0" width="14" height="2" fill="#424242"/><rect x="13" y="0" width="1" height="12" fill="#424242"/><rect x="9" y="11" width="5" height="1" fill="#424242"/><rect x="1" y="5" width="8" height="2" fill="#424242"/><rect x="8" y="5" width="1" height="7" fill="#424242"/><rect x="1" y="7" width="1" height="6" fill="#424242"/><rect x="0" y="12" width="6" height="1" fill="#424242"/><rect x="2" y="7" width="6" height="5" fill="#fff"/></svg>
<div class="t" style="left:776px;top:310.84px;font-size:12px;letter-spacing:-0.2px;color:#1e1e1e;">ServiceTickets.sql</div>
<svg style="left:713px;top:335px" width="5" height="7"><path d="M1 3V2.2a1.5 1.5 0 0 1 3 0V3" stroke="#1ba1e2" stroke-width="1" fill="none"/><rect x="0" y="3" width="5" height="4" fill="#1ba1e2"/><rect x="2" y="4" width="1" height="2" fill="#fff"/></svg>
<svg style="left:720px;top:331px" width="15" height="15"><rect x="0" y="2" width="13" height="10" fill="#f4f4f4"/><rect x="0" y="0" width="14" height="2" fill="#424242"/><rect x="13" y="0" width="1" height="12" fill="#424242"/><rect x="9" y="11" width="5" height="1" fill="#424242"/><rect x="1" y="5" width="8" height="2" fill="#424242"/><rect x="8" y="5" width="1" height="7" fill="#424242"/><rect x="1" y="7" width="1" height="6" fill="#424242"/><rect x="0" y="12" width="6" height="1" fill="#424242"/><rect x="2" y="7" width="6" height="5" fill="#fff"/></svg>
<div class="t" style="left:740px;top:328.84px;font-size:12px;letter-spacing:-0.2px;color:#1e1e1e;">PopulateDefaults.sql</div>
<svg style="left:682px;top:351px" width="7" height="11"><path d="M0.6 0.8v8.6l4.4-4.3z" stroke="#1e1e1e" stroke-width="1.1" fill="none"/></svg>
<svg style="left:695px;top:353px" width="5" height="7"><path d="M1 3V2.2a1.5 1.5 0 0 1 3 0V3" stroke="#1ba1e2" stroke-width="1" fill="none"/><rect x="0" y="3" width="5" height="4" fill="#1ba1e2"/><rect x="2" y="4" width="1" height="2" fill="#fff"/></svg>
<svg style="left:702px;top:350px" width="15" height="15"><rect x="0" y="2" width="13" height="10" fill="#f4f4f4"/><rect x="0" y="0" width="14" height="2" fill="#424242"/><rect x="13" y="0" width="1" height="12" fill="#424242"/><rect x="9" y="11" width="5" height="1" fill="#424242"/><rect x="0" y="0" width="1" height="5" fill="#424242"/><rect x="0" y="6" width="9" height="9" fill="#fff"/><circle cx="4.5" cy="9" r="4.5" fill="#388a34"/><path d="M0.5 8h8M0.5 10.5h8M3 4.5v9M6 4.5v9" stroke="#fff" stroke-width="0.8"/></svg>
<div class="t" style="left:722px;top:346.84px;font-size:12px;letter-spacing:-0.2px;color:#1e1e1e;">FabrikamFiber.Extranet.Web</div>
<svg style="left:682px;top:369px" width="7" height="11"><path d="M0.6 0.8v8.6l4.4-4.3z" stroke="#1e1e1e" stroke-width="1.1" fill="none"/></svg>
<svg style="left:695px;top:371px" width="5" height="7"><path d="M1 3V2.2a1.5 1.5 0 0 1 3 0V3" stroke="#1ba1e2" stroke-width="1" fill="none"/><rect x="0" y="3" width="5" height="4" fill="#1ba1e2"/><rect x="2" y="4" width="1" height="2" fill="#fff"/></svg>
<svg style="left:702px;top:368px" width="15" height="15"><rect x="0" y="2" width="13" height="10" fill="#f4f4f4"/><rect x="0" y="0" width="14" height="2" fill="#424242"/><rect x="13" y="0" width="1" height="12" fill="#424242"/><rect x="9" y="11" width="5" height="1" fill="#424242"/><rect x="0" y="0" width="1" height="5" fill="#424242"/><rect x="0" y="3" width="9" height="12" fill="#fff"/><rect x="9" y="13" width="5" height="1" fill="#424242"/><path d="M2.5 3.5h4M3.5 3.5v3l-3 6M5.5 3.5v3l3 6" stroke="#388a34" stroke-width="1.1" fill="none"/><path d="M0 12.5l2.2-4h4.6l2.2 4v1.5h-9z" fill="#388a34"/></svg>
<div class="t" style="left:722px;top:364.84px;font-size:12px;letter-spacing:-0.2px;color:#1e1e1e;">FabrikamFiber.Extranet.Web.Tests</div>
<svg style="left:682px;top:387px" width="7" height="11"><path d="M0.6 0.8v8.6l4.4-4.3z" stroke="#1e1e1e" stroke-width="1.1" fill="none"/></svg>
<svg style="left:695px;top:389px" width="5" height="7"><path d="M1 3V2.2a1.5 1.5 0 0 1 3 0V3" stroke="#1ba1e2" stroke-width="1" fill="none"/><rect x="0" y="3" width="5" height="4" fill="#1ba1e2"/><rect x="2" y="4" width="1" height="2" fill="#fff"/></svg>
<svg style="left:702px;top:386px" width="15" height="15"><rect x="0" y="2" width="13" height="10" fill="#f4f4f4"/><rect x="0" y="0" width="14" height="2" fill="#424242"/><rect x="13" y="0" width="1" height="12" fill="#424242"/><rect x="9" y="11" width="5" height="1" fill="#424242"/><rect x="0" y="0" width="1" height="5" fill="#424242"/><rect x="0" y="6" width="9" height="9" fill="#fff"/><circle cx="4.5" cy="9" r="4.5" fill="#388a34"/><path d="M0.5 8h8M0.5 10.5h8M3 4.5v9M6 4.5v9" stroke="#fff" stroke-width="0.8"/></svg>
<div class="t" style="left:722px;top:382.84px;font-size:12px;letter-spacing:-0.2px;color:#1e1e1e;font-weight:bold;">FabrikamFiber.Web</div>
<svg style="left:682px;top:405px" width="7" height="11"><path d="M0.6 0.8v8.6l4.4-4.3z" stroke="#1e1e1e" stroke-width="1.1" fill="none"/></svg>
<svg style="left:695px;top:407px" width="5" height="7"><path d="M1 3V2.2a1.5 1.5 0 0 1 3 0V3" stroke="#1ba1e2" stroke-width="1" fill="none"/><rect x="0" y="3" width="5" height="4" fill="#1ba1e2"/><rect x="2" y="4" width="1" height="2" fill="#fff"/></svg>
<svg style="left:702px;top:404px" width="15" height="15"><rect x="0" y="2" width="13" height="10" fill="#f4f4f4"/><rect x="0" y="0" width="14" height="2" fill="#424242"/><rect x="13" y="0" width="1" height="12" fill="#424242"/><rect x="9" y="11" width="5" height="1" fill="#424242"/><rect x="0" y="0" width="1" height="5" fill="#424242"/><rect x="0" y="3" width="9" height="12" fill="#fff"/><rect x="9" y="13" width="5" height="1" fill="#424242"/><path d="M2.5 3.5h4M3.5 3.5v3l-3 6M5.5 3.5v3l3 6" stroke="#388a34" stroke-width="1.1" fill="none"/><path d="M0 12.5l2.2-4h4.6l2.2 4v1.5h-9z" fill="#388a34"/></svg>
<div class="t" style="left:722px;top:400.84px;font-size:12px;letter-spacing:-0.2px;color:#1e1e1e;">FabrikamFiber.Web.Tests</div>
<svg style="left:682px;top:423px" width="7" height="11"><path d="M0.6 0.8v8.6l4.4-4.3z" stroke="#1e1e1e" stroke-width="1.1" fill="none"/></svg>
<svg style="left:695px;top:425px" width="5" height="7"><path d="M1 3V2.2a1.5 1.5 0 0 1 3 0V3" stroke="#1ba1e2" stroke-width="1" fill="none"/><rect x="0" y="3" width="5" height="4" fill="#1ba1e2"/><rect x="2" y="4" width="1" height="2" fill="#fff"/></svg>
<svg style="left:702px;top:422px" width="15" height="15"><rect x="0" y="2" width="13" height="10" fill="#f4f4f4"/><rect x="0" y="0" width="14" height="2" fill="#424242"/><rect x="13" y="0" width="1" height="12" fill="#424242"/><rect x="9" y="11" width="5" height="1" fill="#424242"/><rect x="0" y="0" width="1" height="5" fill="#424242"/><rect x="0" y="3" width="9" height="12" fill="#fff"/><rect x="9" y="13" width="5" height="1" fill="#424242"/><path d="M2.5 3.5h4M3.5 3.5v3l-3 6M5.5 3.5v3l3 6" stroke="#388a34" stroke-width="1.1" fill="none"/><path d="M0 12.5l2.2-4h4.6l2.2 4v1.5h-9z" fill="#388a34"/></svg>
<div class="t" style="left:722px;top:418.84px;font-size:12px;letter-spacing:-0.2px;color:#1e1e1e;">FabrikamFiber.Web.UITests</div>
</div>
<div class="a" style="left:670px;top:710px;width:254px;height:17px;background:#e8e8ec;"></div>
<svg style="left:677px;top:714px" width="8" height="10"><path d="M5 0v9l-5-4.5z" fill="#868999"/></svg>
<div class="a" style="left:688px;top:714px;width:195px;height:9px;background:#c2c3c9;"></div>
<svg style="left:912px;top:714px" width="8" height="10"><path d="M0 0v9l5-4.5z" fill="#868999"/></svg>
<div class="a" style="left:670px;top:727px;width:254px;height:26px;background:#2a3955;"></div>
<div class="a" style="left:670px;top:727px;width:100px;height:20px;background:#fff;"></div>
<div class="t" style="left:676px;top:726.84px;font-size:12px;letter-spacing:-0.25px;color:#000;">Solution Explorer</div>
<div class="a" style="left:771px;top:728px;width:85px;height:20px;background:#4d6082;"></div>
<div class="t" style="left:777px;top:726.84px;font-size:12px;letter-spacing:-0.1px;color:#fff;">Team Explorer</div>
<div class="a" style="left:670px;top:24px;width:1px;height:703px;background:#8a99b5;"></div>
<div class="a" style="left:923px;top:24px;width:1px;height:703px;background:#8a99b5;"></div>
<div class="t" style="left:928px;top:2px;width:20px;height:60px;"><div style="position:absolute;left:0;top:0;transform-origin:0 0;transform:translate(17px,0.5px) rotate(90deg);font-size:12px;letter-spacing:-0.2px;color:#fff;line-height:14px">Properties</div></div>
<div class="a" style="left:949px;top:2px;width:6px;height:53px;background:#4d6082;"></div>
<div class="a" style="left:955px;top:0px;width:1px;height:757px;background:#3d6ca8;"></div>
</body></html>
